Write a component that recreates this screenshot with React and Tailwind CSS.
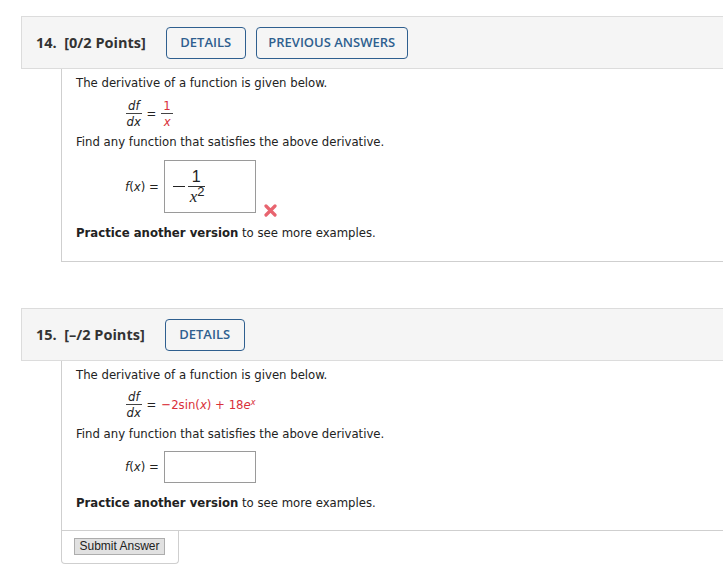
import React from 'react';

const RED = 'text-[#d9303a]';

const Frac = ({ top, bottom, className = '' }) => (
  <span className={`inline-flex flex-col items-center align-middle ${className}`}>
    <span className="border-b border-[#444] px-[2px] leading-[14px]">{top}</span>
    <span className="leading-[15px]">{bottom}</span>
  </span>
);

const Header = ({ number, points, prev }) => (
  <div className="h-[53px] flex items-center pl-[14px] bg-[#f5f5f5] border border-r-0 border-[#dcdcdc]">
    <span className="font-['Open_Sans',sans-serif] font-bold text-[14.5px] text-[#333] whitespace-pre">
      {`${number}.  [${points} Points]`}
    </span>
    <button className="ml-[20px] h-[32px] w-[80px] rounded-[4px] border border-[#2f5f8f] text-[#2f5f8f] font-['Open_Sans',sans-serif] font-semibold text-[13px] bg-transparent">
      DETAILS
    </button>
    {prev && (
      <button className="ml-[10px] h-[32px] w-[152px] rounded-[4px] border border-[#2f5f8f] text-[#2f5f8f] font-['Open_Sans',sans-serif] font-semibold text-[13px] bg-transparent">
        PREVIOUS ANSWERS
      </button>
    )}
  </div>
);

const Wrong = () => (
  <svg width="13" height="13" viewBox="0 0 13 13" className="ml-[8px] mb-[-4px] self-end">
    <path d="M2 2 L11 11 M11 2 L2 11" stroke="#e8646f" strokeWidth="3.2" strokeLinecap="round" />
  </svg>
);

export default function App() {
  const body = "font-['DejaVu_Sans_Condensed','DejaVu_Sans',Tahoma,sans-serif] text-[13px] text-[#222]";
  return (
    <div className="w-[723px] h-[587px] overflow-hidden bg-white pt-[16px] pl-[21px]">
      {/* Question 14 */}
      <Header number="14" points="0/2" prev />
      <div className={`ml-[40px] border-l border-b border-[#cfcfcf] pl-[14px] pt-[6px] h-[193px] ${body}`}>
        <p className="leading-[16px]">The derivative of a function is given below.</p>
        <div className="mt-[7px] ml-[50px] flex items-center h-[31px]">
          <Frac top={<i>df</i>} bottom={<i>dx</i>} />
          <span className="mx-[5px]">=</span>
          <Frac top="1" bottom={<i>x</i>} className={RED} />
        </div>
        <p className="mt-[5px] leading-[16px]">Find any function that satisfies the above derivative.</p>
        <div className="mt-[10px] ml-[49px] flex items-center">
          <span><i>f</i>(<i>x</i>) =</span>
          <div className="ml-[5px] w-[92px] h-[53px] border border-[#9a9a9a] flex items-center pl-[8px]">
            <span className="w-[12px] h-[1.5px] bg-[#222] mr-[3px]" />
            <span className="inline-flex flex-col items-center">
              <span className="font-['Liberation_Sans',Arial,sans-serif] text-[16px] leading-[19px] border-b border-[#333] px-[4px]">1</span>
              <span className="font-['Liberation_Serif',serif] italic text-[17px] leading-[19px] pl-[2px]">x<sup className="not-italic font-['Liberation_Sans',Arial,sans-serif] text-[13px]">2</sup></span>
            </span>
          </div>
          <Wrong />
        </div>
        <p className="mt-[12px] leading-[16px]"><b>Practice another version</b> to see more examples.</p>
      </div>

      <div className="h-[46px]" />

      {/* Question 15 */}
      <Header number="15" points="–/2" />
      <div className={`ml-[40px] border-l border-b border-[#cfcfcf] pl-[14px] pt-[6px] h-[170px] ${body}`}>
        <p className="leading-[16px]">The derivative of a function is given below.</p>
        <div className="mt-[7px] ml-[50px] flex items-center h-[30px]">
          <Frac top={<i>df</i>} bottom={<i>dx</i>} />
          <span className="mx-[5px]">=</span>
          <span className={RED}>−2sin(<i>x</i>) + 18<i>e</i><sup className="italic text-[9px]">x</sup></span>
        </div>
        <p className="mt-[6px] leading-[16px]">Find any function that satisfies the above derivative.</p>
        <div className="mt-[9px] ml-[49px] flex items-center">
          <span><i>f</i>(<i>x</i>) =</span>
          <div className="ml-[5px] w-[92px] h-[32px] border border-[#9a9a9a]" />
        </div>
        <p className="mt-[12px] leading-[16px]"><b>Practice another version</b> to see more examples.</p>
      </div>
      <div className="ml-[40px] w-[118px] h-[33px] border-l border-r border-b border-[#cfcfcf] rounded-b-[4px] pl-[12px] pt-[7px] flex items-start">
        <button className="h-[17px] w-[91px] bg-[#e1e1e1] border border-[#adadad] font-['Liberation_Sans',Arial,sans-serif] text-[12px] text-[#222] leading-[15px]">
          Submit Answer
        </button>
      </div>
    </div>
  );
}
